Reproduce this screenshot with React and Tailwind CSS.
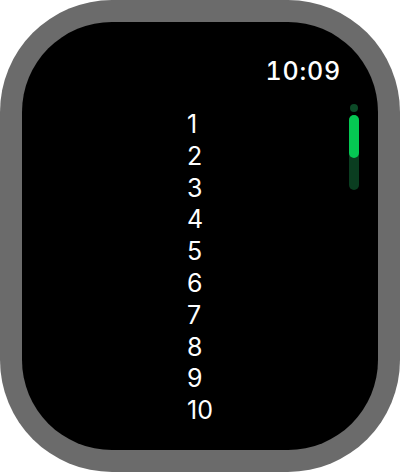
export default function App() {
  const items = [1, 2, 3, 4, 5, 6, 7, 8, 9, 10];
  return (
    <div
      className="w-[400px] h-[472px] bg-white"
      style={{ fontFamily: "Inter, 'Noto Sans', sans-serif" }}
    >
      {/* watch bezel */}
      <div className="w-full h-full rounded-[112px] bg-[#6b6b6b] p-[22px]">
        {/* screen */}
        <div className="relative w-full h-full rounded-[90px] bg-black flex flex-col text-white">
          {/* status bar */}
          <div className="flex justify-end pt-[33px] pr-[37px]">
            <span className="text-[25px] leading-[32px] font-medium tabular-nums tracking-[0.8px]">10:09</span>
          </div>

          {/* list */}
          <div className="flex justify-center mt-[22px]">
            <div className="flex flex-col items-start">
              {items.map((n) => (
                <span key={n} className="text-[25px] leading-[31.8px]">
                  {n}
                </span>
              ))}
            </div>
          </div>

          {/* scroll indicator */}
          <div className="absolute top-[82px] right-[19px] w-[10px] flex flex-col items-center gap-[3px]">
            <div className="w-[8px] h-[8px] rounded-full bg-[#0c4a27]" />
            <div className="w-[10px] h-[75px] rounded-full bg-[#0a3d20] flex flex-col">
              <div className="w-full h-[43px] rounded-full bg-[#05c853]" />
            </div>
          </div>
        </div>
      </div>
    </div>
  );
}
